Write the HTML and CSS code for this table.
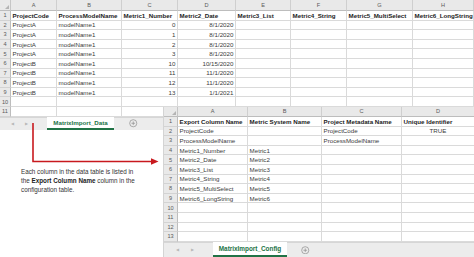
FILE: index.html
```html
<!DOCTYPE html>
<html>
<head>
<meta charset="utf-8">
<link rel="stylesheet" href="styles.css">
</head>
<body>
<div class="page">
  <section class="sheet sheet-data">
    <div class="grid grid-data">
      <div class="corner"><svg class="tri" viewBox="0 0 5 5"><polygon points="5,0 5,5 0,5"/></svg></div>
      <div class="ch">A</div><div class="ch">B</div><div class="ch">C</div><div class="ch">D</div><div class="ch">E</div><div class="ch">F</div><div class="ch">G</div><div class="ch">H</div>

      <div class="rh">1</div><div class="c b">ProjectCode</div><div class="c b">ProcessModelName</div><div class="c b">Metric1_Number</div><div class="c b">Metric2_Date</div><div class="c b">Metric3_List</div><div class="c b">Metric4_String</div><div class="c b">Metric5_MultiSelect</div><div class="c b">Metric6_LongString</div>
      <div class="rh">2</div><div class="c">ProjectA</div><div class="c">modelName1</div><div class="c r">0</div><div class="c r">8/1/2020</div><div class="c"></div><div class="c"></div><div class="c"></div><div class="c"></div>
      <div class="rh">3</div><div class="c">ProjectA</div><div class="c">modelName1</div><div class="c r">1</div><div class="c r">8/1/2020</div><div class="c"></div><div class="c"></div><div class="c"></div><div class="c"></div>
      <div class="rh">4</div><div class="c">ProjectA</div><div class="c">modelName1</div><div class="c r">2</div><div class="c r">8/1/2020</div><div class="c"></div><div class="c"></div><div class="c"></div><div class="c"></div>
      <div class="rh">5</div><div class="c">ProjectA</div><div class="c">modelName1</div><div class="c r">3</div><div class="c r">8/1/2020</div><div class="c"></div><div class="c"></div><div class="c"></div><div class="c"></div>
      <div class="rh">6</div><div class="c">ProjectB</div><div class="c">modelName1</div><div class="c r">10</div><div class="c r">10/15/2020</div><div class="c"></div><div class="c"></div><div class="c"></div><div class="c"></div>
      <div class="rh">7</div><div class="c">ProjectB</div><div class="c">modelName1</div><div class="c r">11</div><div class="c r">11/1/2020</div><div class="c"></div><div class="c"></div><div class="c"></div><div class="c"></div>
      <div class="rh">8</div><div class="c">ProjectB</div><div class="c">modelName1</div><div class="c r">12</div><div class="c r">11/1/2020</div><div class="c"></div><div class="c"></div><div class="c"></div><div class="c"></div>
      <div class="rh">9</div><div class="c">ProjectB</div><div class="c">modelName1</div><div class="c r">13</div><div class="c r">1/1/2021</div><div class="c"></div><div class="c"></div><div class="c"></div><div class="c"></div>
      <div class="rh">10</div><div class="c"></div><div class="c"></div><div class="c"></div><div class="c"></div><div class="c"></div><div class="c"></div><div class="c"></div><div class="c"></div>
      <div class="rh">11</div><div class="c"></div><div class="c"></div><div class="c"></div><div class="c"></div><div class="c"></div><div class="c"></div><div class="c"></div><div class="c"></div>
    </div>
    <div class="tabbar tabbar-data">
      <span class="nav">&#9664;</span><span class="nav">&#9654;</span>
      <span class="tab">MatrixImport_Data</span>
      <svg class="add" viewBox="0 0 10 10"><circle cx="5" cy="5" r="4.2"/><path d="M5 2.8V7.2M2.8 5H7.2"/></svg>
    </div>
  </section>

  <p class="note">Each column in the data table is listed in<br>the <b>Export Column Name</b> column in the<br>configuration table.</p>

  <svg class="arrow" viewBox="0 0 170 170" width="170" height="170">
    <path d="M33 123V161.5H152" fill="none" stroke="#c8191e" stroke-width="1.6"/>
    <polygon points="151,158.3 158.5,161.5 151,164.7" fill="#c8191e"/>
  </svg>

  <section class="sheet sheet-config">
    <div class="grid grid-config">
      <div class="corner"><svg class="tri" viewBox="0 0 5 5"><polygon points="5,0 5,5 0,5"/></svg></div>
      <div class="ch">A</div><div class="ch">B</div><div class="ch">C</div><div class="ch">D</div>

      <div class="rh">1</div><div class="c b">Export Column Name</div><div class="c b">Metric System Name</div><div class="c b">Project Metadata Name</div><div class="c b">Unique Identifier</div>
      <div class="rh">2</div><div class="c">ProjectCode</div><div class="c"></div><div class="c">ProjectCode</div><div class="c m">TRUE</div>
      <div class="rh">3</div><div class="c">ProcessModelName</div><div class="c"></div><div class="c">ProcessModelName</div><div class="c"></div>
      <div class="rh">4</div><div class="c">Metric1_Number</div><div class="c">Metric1</div><div class="c"></div><div class="c"></div>
      <div class="rh">5</div><div class="c">Metric2_Date</div><div class="c">Metric2</div><div class="c"></div><div class="c"></div>
      <div class="rh">6</div><div class="c">Metric3_List</div><div class="c">Metric3</div><div class="c"></div><div class="c"></div>
      <div class="rh">7</div><div class="c">Metric4_String</div><div class="c">Metric4</div><div class="c"></div><div class="c"></div>
      <div class="rh">8</div><div class="c">Metric5_MultiSelect</div><div class="c">Metric5</div><div class="c"></div><div class="c"></div>
      <div class="rh">9</div><div class="c">Metric6_LongString</div><div class="c">Metric6</div><div class="c"></div><div class="c"></div>
      <div class="rh">10</div><div class="c"></div><div class="c"></div><div class="c"></div><div class="c"></div>
      <div class="rh">11</div><div class="c"></div><div class="c"></div><div class="c"></div><div class="c"></div>
      <div class="rh">12</div><div class="c"></div><div class="c"></div><div class="c"></div><div class="c"></div>
      <div class="rh">13</div><div class="c"></div><div class="c"></div><div class="c"></div><div class="c"></div>
    </div>
    <div class="tabbar tabbar-config">
      <span class="nav">&#9664;</span><span class="nav">&#9654;</span>
      <span class="tab">MatrixImport_Config</span>
      <svg class="add" viewBox="0 0 10 10"><circle cx="5" cy="5" r="4.2"/><path d="M5 2.8V7.2M2.8 5H7.2"/></svg>
    </div>
  </section>
</div>
</body>
</html>
```

FILE: styles.css
```css
* { box-sizing: border-box; }
html, body { margin: 0; padding: 0; background: #ffffff; }
.page {
  position: relative;
  width: 474px;
  height: 257px;
  overflow: hidden;
  font-family: "Liberation Sans", Arial, sans-serif;
  color: #333333;
}
.sheet { background: #ffffff; }
.grid { display: grid; overflow: hidden; }
.grid-data {
  width: 474px;
  grid-template-columns: 11px 46px 65px 56px 58px 55px 56px 66px 61px;
  grid-template-rows: 11px repeat(11, 9.6px);
}
.grid-config {
  grid-template-columns: 14px 70px 74px 80px 73px;
  grid-template-rows: 10.5px repeat(13, 9.6px);
}
.grid > div {
  display: flex;
  align-items: center;
  white-space: nowrap;
  overflow: hidden;
  border-right: 1px solid #dadada;
  border-bottom: 1px solid #dadada;
}
.corner, .ch, .rh {
  background: #e9e9e9;
  color: #5a5a5a;
  font-size: 5.6px;
  justify-content: center;
}
.grid > .corner { border-right-color: #c6c6c6; border-bottom-color: #bdbdbd; justify-content: flex-end; align-items: flex-end; padding: 0 1.5px 1.5px 0; }
.grid > .ch { border-right-color: #cfcfcf; border-bottom-color: #bdbdbd; }
.grid > .rh { border-right-color: #bdbdbd; border-bottom-color: #d3d3d3; }
.tri { width: 4px; height: 4px; fill: #b4b4b4; }
.c {
  font-size: 6.2px;
  padding: 0 1.6px;
  color: #3a3a3a;
}
.c.b { font-weight: bold; color: #222222; }
.c.r { justify-content: flex-end; }
.c.m { justify-content: center; }

.tabbar {
  display: flex;
  align-items: stretch;
  background: #ececec;
  border-top: 1px solid #d6d6d6;
}
.tabbar-data { height: 13px; width: 163px; padding-left: 11px; }
.tabbar-config { height: 15.2px; padding-left: 12px; }
.nav {
  display: flex;
  align-items: center;
  font-size: 4px;
  color: #b8b8b8;
  width: 14px;
}
.tabbar-config .nav { width: 15px; }
.tab {
  display: flex;
  align-items: center;
  justify-content: center;
  background: #ffffff;
  color: #217346;
  font-weight: bold;
  font-size: 6.2px;
  border-bottom: 2px solid #217346;
  margin-left: 8px;
  margin-top: -1px;
  width: 67px;
}
.tabbar-config .tab { width: 74px; margin-left: 7px; font-size: 6.4px; }
.add {
  width: 8.5px;
  height: 8.5px;
  align-self: center;
  margin-left: 15px;
  fill: none;
  stroke: #8a8a8a;
  stroke-width: 0.8;
}
.tabbar-config .add { margin-left: 14px; }

.note {
  margin: 37px 0 0 21px;
  font-size: 6.3px;
  line-height: 9.4px;
  color: #333333;
}
.note b { color: #222222; }

.arrow { position: absolute; left: 0; top: 0; }

.sheet-config {
  position: absolute;
  left: 163px;
  top: 106.5px;
  width: 311px;
  bottom: 0;
  border-left: 1px solid #d4d4d4;
}
```
